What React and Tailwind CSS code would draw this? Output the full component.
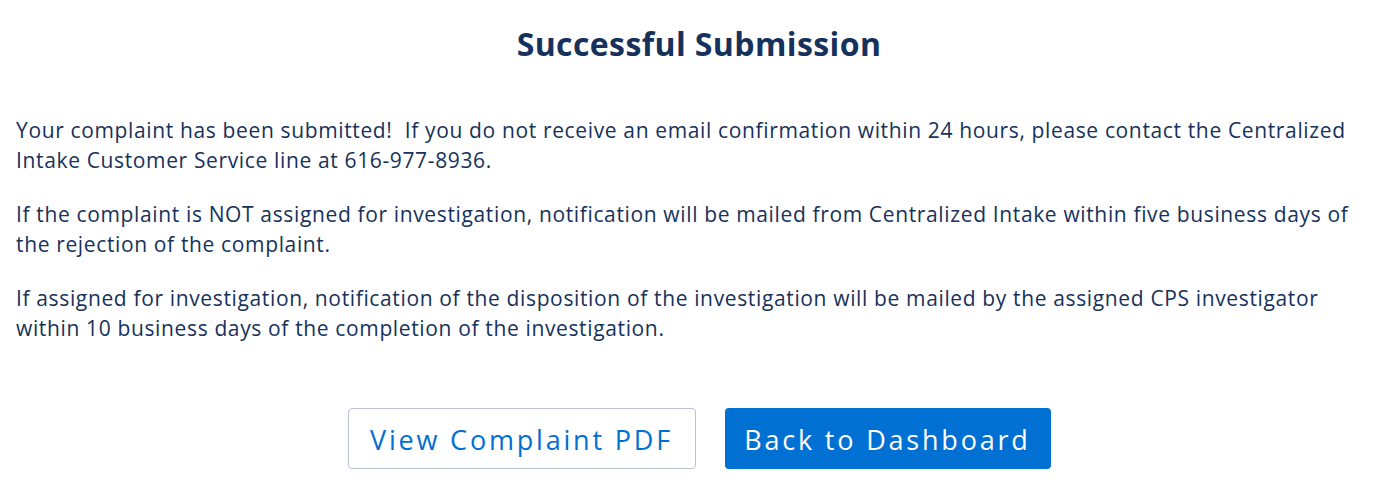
export default function App() {
  return (
    <div className="min-h-screen bg-white pl-4 text-[#16325c]" style={{ fontFamily: '"Open Sans", sans-serif' }}>
      <h1 className="pl-[4px] pt-[22px] text-center text-[32px] font-bold leading-[44px] tracking-[0.4px]">Successful Submission</h1>
      <div className="mt-[49px] pr-[12px] text-[21px] leading-[30px] tracking-[0.64px]">
        <p>
          Your complaint has been submitted!&nbsp; If you do not receive an email confirmation within 24 hours, please contact the Centralized Intake Customer Service line at 616-977-8936.
        </p>
        <p className="mt-6">
          If the complaint is NOT assigned for investigation, notification will be mailed from Centralized Intake within five business days of the rejection of the complaint.
        </p>
        <p className="mt-6">
          If assigned for investigation, notification of the disposition of the investigation will be mailed by the assigned CPS investigator within 10 business days of the completion of the investigation.
        </p>
      </div>
      <div className="mt-[65px] flex justify-center gap-[29px] pl-[4px]">
        <button className="h-[61px] w-[348px] rounded border border-[#b9c3d3] bg-white pt-[3px] text-[27px] tracking-[2.8px] text-[#0070d2]">
          View Complaint PDF
        </button>
        <button className="h-[61px] w-[326px] rounded bg-[#0070d2] pt-[3px] text-[27px] tracking-[2.8px] text-white">
          Back to Dashboard
        </button>
      </div>
    </div>
  );
}
